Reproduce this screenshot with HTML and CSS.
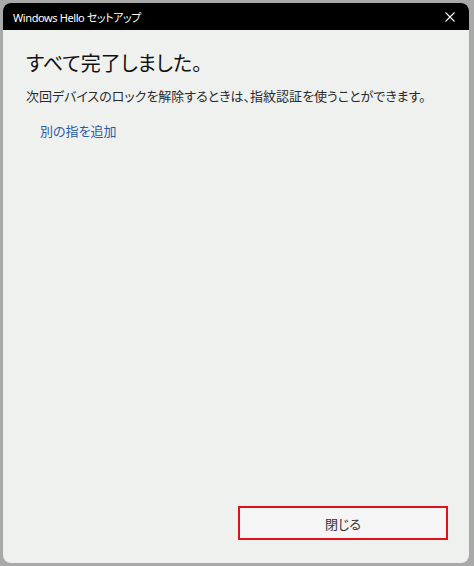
FILE: index.html
```html
<!DOCTYPE html>
<html lang="ja">
<head>
<meta charset="utf-8">
<title>Windows Hello セットアップ</title>
<link rel="stylesheet" href="styles.css">
</head>
<body>
<div class="window">
  <div class="titlebar">
    <span class="title">Windows Hello セットアップ</span>
    <svg class="close" width="10" height="10" viewBox="0 0 10 10" aria-hidden="true">
      <path d="M0.5 0.5 L9.5 9.5 M9.5 0.5 L0.5 9.5" stroke="#ffffff" stroke-width="1.1" fill="none"/>
    </svg>
  </div>
  <div class="content">
    <h1 class="heading">すべて完了しました。</h1>
    <p class="desc">次回デバイスのロックを解除するときは、指紋認証を使うことができます。</p>
    <a class="link">別の指を追加</a>
  </div>
  <div class="footer">
    <button class="btn">閉じる</button>
  </div>
</div>
</body>
</html>
```

FILE: styles.css
```css
html, body {
  margin: 0;
  padding: 0;
}
body {
  background: #a8a9a8;
  width: 474px;
  height: 566px;
  overflow: hidden;
  font-family: "Noto Sans", "Noto Sans CJK JP", sans-serif;
}
.window {
  margin: 3px 0 0 3px;
  width: 466px;
  height: 560px;
  background: #eff1ef;
  border-radius: 8px;
  overflow: hidden;
  display: flex;
  flex-direction: column;
}
.titlebar {
  height: 27px;
  background: #000000;
  display: flex;
  align-items: center;
  justify-content: space-between;
  padding: 0 14px 0 10px;
  flex: none;
}
.title {
  color: #ffffff;
  font-size: 11px;
  font-feature-settings: "palt";
  letter-spacing: -0.4px;
}
.close {
  display: block;
}
.content {
  padding: 20px 20px 0 23px;
  flex: 1;
  font-feature-settings: "palt";
}
.heading {
  margin: 0;
  font-size: 20px;
  font-weight: 400;
  line-height: 28px;
  color: #111111;
}
.desc {
  margin: 9px 0 0 0;
  font-size: 13px;
  line-height: 18px;
  color: #2a2a2a;
}
.link {
  display: inline-block;
  margin: 17px 0 0 14px;
  font-size: 13px;
  line-height: 18px;
  color: #2b5ba3;
}
.footer {
  display: flex;
  justify-content: flex-end;
  padding: 0 21px 23px 0;
  flex: none;
}
.btn {
  width: 210px;
  height: 34px;
  border: 2px solid #e0101c;
  background: #f4f5f4;
  color: #333333;
  font-family: "Noto Sans CJK JP", sans-serif;
  font-size: 13px;
  font-feature-settings: "palt";
  padding: 0;
}
```
